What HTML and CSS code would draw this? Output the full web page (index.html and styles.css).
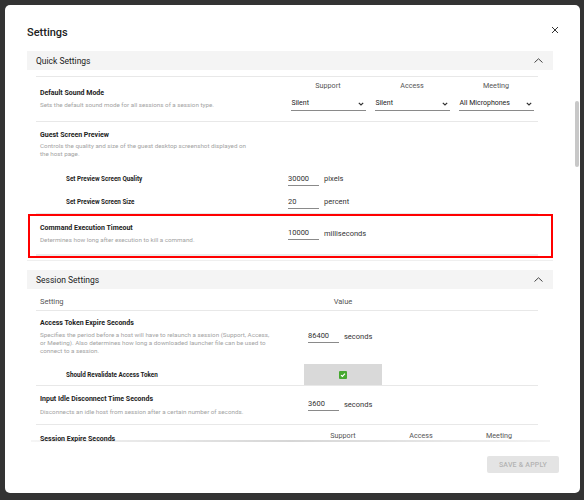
FILE: index.html
```html
<!DOCTYPE html>
<html lang="en">
<head>
<meta charset="utf-8">
<title>Settings</title>
<link rel="stylesheet" href="styles.css">
</head>
<body>
<div class="dialog">
  <header class="dlg-head">
    <h1 class="dlg-title">Settings</h1>
    <button class="close" aria-label="Close"><svg width="8" height="8" viewBox="0 0 8 8"><path d="M1 1L7 7M7 1L1 7" stroke="#333" stroke-width="1"/></svg></button>
  </header>
  <div class="dlg-body">
    <section class="panel">
      <div class="panel-head"><span>Quick Settings</span><svg width="9" height="5" viewBox="0 0 9 5"><path d="M0.5 4.5L4.5 0.8L8.5 4.5" fill="none" stroke="#444" stroke-width="1"/></svg></div>
      <div class="panel-body">
        <div class="row row-sound">
          <div class="main">
            <div class="info">
              <div class="title">Default Sound Mode</div>
              <div class="desc">Sets the default sound mode for all sessions of a session type.</div>
            </div>
            <div class="modes">
              <div class="mode"><div class="mode-label">Support</div><div class="select"><span>Silent</span><svg width="6" height="4" viewBox="0 0 6 4"><path d="M0.8 0.8L3 3L5.2 0.8" fill="none" stroke="#333" stroke-width="1.2"/></svg></div></div>
              <div class="mode"><div class="mode-label">Access</div><div class="select"><span>Silent</span><svg width="6" height="4" viewBox="0 0 6 4"><path d="M0.8 0.8L3 3L5.2 0.8" fill="none" stroke="#333" stroke-width="1.2"/></svg></div></div>
              <div class="mode"><div class="mode-label">Meeting</div><div class="select"><span>All Microphones</span><svg width="6" height="4" viewBox="0 0 6 4"><path d="M0.8 0.8L3 3L5.2 0.8" fill="none" stroke="#333" stroke-width="1.2"/></svg></div></div>
            </div>
          </div>
        </div>
        <div class="row row-guest">
          <div class="info">
            <div class="title">Guest Screen Preview</div>
            <div class="desc">Controls the quality and size of the guest desktop screenshot displayed on the host page.</div>
          </div>
          <div class="subs">
            <div class="sub"><div class="sub-label">Set Preview Screen Quality</div><div class="value"><input class="num" value="30000"><span class="unit">pixels</span></div></div>
            <div class="sub"><div class="sub-label">Set Preview Screen Size</div><div class="value"><input class="num" value="20"><span class="unit">percent</span></div></div>
          </div>
        </div>
        <div class="row row-cmd">
          <div class="main">
            <div class="info">
              <div class="title">Command Execution Timeout</div>
              <div class="desc">Determines how long after execution to kill a command.</div>
            </div>
            <div class="value"><input class="num" value="10000"><span class="unit">milliseconds</span></div>
          </div>
          <div class="highlight"></div>
        </div>
      </div>
    </section>
    <section class="panel">
      <div class="panel-head"><span>Session Settings</span><svg width="9" height="5" viewBox="0 0 9 5"><path d="M0.5 4.5L4.5 0.8L8.5 4.5" fill="none" stroke="#444" stroke-width="1"/></svg></div>
      <div class="panel-body session">
        <div class="table-head"><span class="th-setting">Setting</span><span class="th-value">Value</span></div>
        <div class="row row-token">
          <div class="main">
            <div class="info">
              <div class="title">Access Token Expire Seconds</div>
              <div class="desc">Specifies the period before a host will have to relaunch a session (Support, Access, or Meeting). Also determines how long a downloaded launcher file can be used to connect to a session.</div>
            </div>
            <div class="value"><input class="num" value="86400"><span class="unit">seconds</span></div>
          </div>
          <div class="sub sub-check">
            <div class="sub-label">Should Revalidate Access Token</div>
            <div class="check-cell"><svg width="8" height="8" viewBox="0 0 8 8"><rect width="8" height="8" rx="1" fill="#45a82f"/><path d="M2 4.1L3.4 5.5L6 2.6" fill="none" stroke="#fff" stroke-width="1.2"/></svg></div>
          </div>
        </div>
        <div class="row row-idle">
          <div class="main">
            <div class="info">
              <div class="title">Input Idle Disconnect Time Seconds</div>
              <div class="desc">Disconnects an idle host from session after a certain number of seconds.</div>
            </div>
            <div class="value"><input class="num" value="3600"><span class="unit">seconds</span></div>
          </div>
        </div>
        <div class="row row-expire">
          <div class="main">
            <div class="info">
              <div class="title">Session Expire Seconds</div>
            </div>
            <div class="cols">
              <div class="mode-label">Support</div>
              <div class="mode-label">Access</div>
              <div class="mode-label">Meeting</div>
            </div>
          </div>
        </div>
      </div>
    </section>
  </div>
  <footer class="dlg-foot"><button class="btn-save" disabled>SAVE &amp; APPLY</button></footer>
  <div class="scroll-thumb"></div>
</div>
</body>
</html>
```
FILE: styles.css
```css
* { box-sizing: border-box; }
html, body { margin: 0; }
body {
  background: #333;
  width: 584px;
  height: 500px;
  overflow: hidden;
  padding: 5px 4px 7px 5px;
  font-family: Roboto, "Noto Sans", sans-serif;
  color: #222;
}
.dialog {
  position: relative;
  width: 575px;
  height: 488px;
  background: #fff;
  border-radius: 5px;
  display: flex;
  flex-direction: column;
  overflow: hidden;
}
.dlg-head {
  height: 46px;
  flex: none;
  display: flex;
  justify-content: space-between;
  align-items: flex-start;
  padding: 20px 20px 0 22px;
}
.dlg-title {
  margin: 0;
  font-size: 11px;
  line-height: 15px;
  font-weight: 500;
  color: #212121;
}
.close {
  width: 10px;
  height: 10px;
  padding: 0;
  border: 0;
  background: none;
  display: flex;
  align-items: center;
  justify-content: center;
}
.dlg-body {
  position: relative;
  height: 391px;
  flex: none;
  overflow: hidden;
  padding: 0 27px 0 22px;
}
.dlg-body::after {
  content: "";
  position: absolute;
  left: 26px;
  right: 30px;
  bottom: 0;
  height: 2px;
  background: linear-gradient(to right, rgba(0,0,0,0.04), rgba(0,0,0,0.16) 50%, rgba(0,0,0,0.05));
}
.panel { border-bottom: 1px solid #efefef; }
.panel + .panel { margin-top: 9px; }
.panel-head {
  height: 19px;
  background: #f4f4f4;
  display: flex;
  align-items: center;
  justify-content: space-between;
  padding: 0 10px 0 9px;
  font-size: 8.5px;
  color: #222;
}
.panel-body { padding: 6px 15px 4px 9px; }
.panel-body.session { padding-top: 0; }
.row {
  position: relative;
  display: flex;
  flex-direction: column;
  border-top: 1px solid #e8e8e8;
  padding-left: 4px;
}
.main { display: flex; }
.title {
  font-size: 7px;
  font-weight: 700;
  line-height: 10px;
  color: #222;
}
.desc {
  font-size: 6.25px;
  line-height: 8px;
  color: #a3a3a3;
  margin-top: 3px;
}
.mode-label {
  text-align: center;
  font-size: 7.2px;
  line-height: 10px;
  color: #555;
}
.select {
  margin: 4px auto 0;
  width: 75px;
  height: 16px;
  border-bottom: 1px solid #8a8a8a;
  display: flex;
  align-items: center;
  justify-content: space-between;
  padding: 0 2px 0 1px;
  font-size: 7px;
  color: #222;
}
.select svg { margin-top: 3px; }
.value { display: flex; align-items: center; align-self: flex-start; }
.num {
  width: 31px;
  height: 14px;
  border: 0;
  border-bottom: 1px solid #8a8a8a;
  padding: 0;
  font-family: Roboto, "Noto Sans", sans-serif;
  font-size: 7.5px;
  color: #333;
  background: transparent;
  outline: none;
}
.unit { margin-left: 5px; font-size: 7.5px; color: #333; }

/* Quick settings rows */
.row-sound { height: 45px; }
.row-sound .info { width: 246px; padding-top: 11px; }
.modes { display: grid; grid-template-columns: repeat(3, 84px); padding-top: 4px; }

.row-guest .info { padding-top: 8px; }
.row-guest .desc { line-height: 7.5px; max-width: 212px; }
.subs { margin-top: 9px; }
.sub { height: 23px; display: flex; align-items: center; padding-left: 26px; }
.sub-label { width: 222px; font-size: 6.3px; font-weight: 700; color: #222; }
.sub .value { align-self: center; }

.row-cmd { height: 43px; border-bottom: 2px solid #ececec; }
.row-cmd .info { width: 248px; padding-top: 9px; }
.row-cmd .value { margin-top: 12px; }
.highlight {
  position: absolute;
  top: 0;
  bottom: -4px;
  left: -8px;
  right: -15px;
  border: 2px solid #f00;
  pointer-events: none;
}

/* Session settings */
.table-head {
  display: flex;
  height: 21px;
  padding: 8px 0 0 4px;
  font-size: 7.5px;
  line-height: 10px;
  color: #555;
}
.th-setting { width: 264px; }
.th-value { width: 78px; text-align: center; }

.row-token .info { width: 264px; padding-top: 7px; }
.row-token .desc { max-width: 230px; }
.row-token .value { margin-top: 18px; padding-left: 4px; }
.sub-check { height: 21px; margin-top: 9px; }
.sub-check .sub-label { width: 238px; }
.check-cell {
  width: 78px;
  height: 21px;
  background: #d9d9d9;
  display: flex;
  align-items: center;
  justify-content: center;
}

.row-idle { padding-bottom: 8px; }
.row-idle .info { width: 264px; padding-top: 8px; }
.row-idle .desc { margin-top: 4px; }
.row-idle .value { margin-top: 11px; padding-left: 4px; }

.row-expire .info { width: 264px; padding-top: 9px; }
.cols { display: grid; grid-template-columns: repeat(3, 78px); padding-top: 6px; }

.dlg-foot {
  flex: 1;
  display: flex;
  justify-content: flex-end;
  align-items: flex-start;
  padding: 14px 21px 0 0;
}
.btn-save {
  width: 72px;
  height: 17px;
  border: 0;
  border-radius: 2px;
  background: #e4e4e4;
  color: #b3b3b3;
  font-family: Roboto, "Noto Sans", sans-serif;
  font-size: 7px;
  font-weight: 500;
  letter-spacing: 0.2px;
  padding: 0;
}
.scroll-thumb {
  position: absolute;
  left: 570px;
  top: 96px;
  width: 4px;
  height: 66px;
  background: #c8c8c8;
  border-radius: 2px;
}
```
